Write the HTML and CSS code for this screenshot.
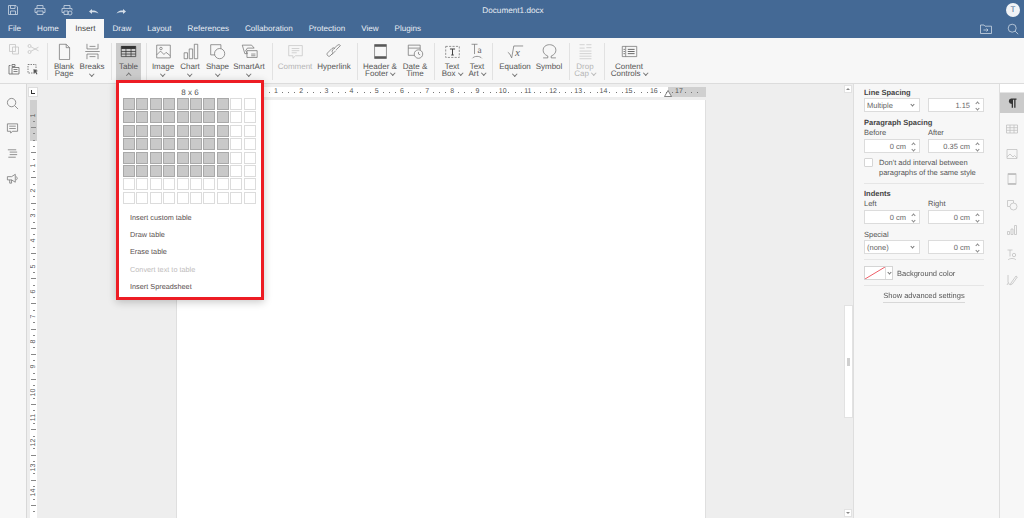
FILE: index.html
```html
<!DOCTYPE html>
<html lang="en">
<head>
<meta charset="utf-8">
<title>Document1.docx</title>
<link rel="stylesheet" href="styles.css">
</head>
<body>
<div class="app">
  <header class="head">
    <div class="titlebar">
      <div class="quick">
        <svg class="qi" viewBox="0 0 12 12"><path d="M1.500 1.500h7.500l1.500 1.500v7.500h-9zM3.500 1.500v3h4.500v-3M3.500 10.500v-3.500h5v3.500"/></svg>
        <svg class="qi" viewBox="0 0 12 12"><path d="M3 4V1.500h6V4M3 8.500H1V4.500h10v4H9M3 7h6v3.500H3z"/></svg>
        <svg class="qi" viewBox="0 0 12 12"><path d="M3 4V1.500h6V4M3 8.500H1V4.500h10v2M3 7h4v3.500H3z"/><circle cx="9" cy="9" r="2"/></svg>
        <svg class="qi fill" viewBox="0 0 12 12"><path d="M1 6.500L4 4v1.500c3 0 5 .5 6.500 3-1.500-1-3.500-1.300-6.500-1.200V9z"/></svg>
        <svg class="qi fill" viewBox="0 0 12 12"><path d="M11 6.500L8 4v1.500c-3 0-5 .5-6.500 3 1.500-1 3.500-1.300 6.500-1.200V9z"/></svg>
      </div>
      <div class="doc-title">Document1.docx</div>
      <div class="avatar">T</div>
    </div>
    <nav class="tabs">
      <span class="tab">File</span>
      <span class="tab">Home</span>
      <span class="tab active">Insert</span>
      <span class="tab">Draw</span>
      <span class="tab">Layout</span>
      <span class="tab">References</span>
      <span class="tab">Collaboration</span>
      <span class="tab">Protection</span>
      <span class="tab">View</span>
      <span class="tab">Plugins</span>
      <span class="tab-tools">
        <svg class="ti" viewBox="0 0 12 12"><path d="M.5 2h3.500l1 1.200h6.500v7.300H.5zM3.500 7h4.500M6.500 5.500L8 7 6.500 8.500"/></svg>
        <svg class="ti" viewBox="0 0 12 12"><circle cx="5.200" cy="5.200" r="4"/><path d="M8.200 8.200l3 3"/></svg>
      </span>
    </nav>
  </header>

  <div class="toolbar">
    <div class="group g-clip">
      <svg class="mini dim" viewBox="0 0 12 12"><path d="M1.500 1.500h6v7h-6zM4.500 4h6v7h-6z"/></svg>
      <svg class="mini dim" viewBox="0 0 12 12"><circle cx="2.500" cy="3" r="1.500"/><circle cx="2.500" cy="9" r="1.500"/><path d="M4 3.800l7.500 4M4 8.200l7.500-4"/></svg>
      <svg class="mini" viewBox="0 0 12 12"><path d="M2.500 2.500h-1.500v8.500h3M4 1.500h3v2h-3zM4 4.500h7v6.500h-7z"/><path d="M5.500 6.500h4M5.500 8.500h4"/></svg>
      <svg class="mini" viewBox="0 0 12 12"><path stroke-dasharray="1.500 1" d="M1 1.500h8v8.500h-8z"/><path class="solid" d="M6.500 6l4.500 2-2 .8 1.500 2.200-1 .5-1.300-2.200-1.500 1.200z"/></svg>
    </div>
    <i class="sep"></i>
    <div class="group g-b">
      <div class="tool w28">
        <svg class="ico" viewBox="0 0 20 20"><path d="M4 1.500h8l4 4v14H4zM12 1.500v4h4"/></svg>
        <span class="lbl">Blank<br>Page</span>
      </div>
      <div class="tool w28">
        <svg class="ico" viewBox="0 0 20 20"><path d="M3.500 1v6h13V1M3.500 19v-6h13v6M1.500 10h17M6.500 4h7M6.500 16h7"/></svg>
        <span class="lbl">Breaks</span><b class="chev"></b>
      </div>
    </div>
    <i class="sep"></i>
    <div class="group g-t">
      <div class="tool w25 on">
        <svg class="ico" viewBox="0 0 20 20"><path class="solid dk" d="M1.500 3.500h17v3.500h-17z"/><path class="dark" d="M1.500 4h17v12h-17zM1.500 10h17M1.500 13h17M7 4v12M13 4v12"/></svg>
        <span class="lbl">Table</span><b class="chev up"></b>
      </div>
    </div>
    <i class="sep"></i>
    <div class="group g-i">
      <div class="tool w26">
        <svg class="ico" viewBox="0 0 20 20"><path d="M2 2.500h16v15H2zM2 14l4.500-4.500 4 4 2.500-2.500 5 4"/><circle cx="7" cy="6.500" r="1.500"/></svg>
        <span class="lbl">Image</span><b class="chev"></b>
      </div>
      <div class="tool w28">
        <svg class="ico" viewBox="0 0 20 20"><path d="M2.500 11.500h4v7h-4zM8.500 7h4v11.500h-4zM14.500 1.500h4v17h-4z"/></svg>
        <span class="lbl">Chart</span><b class="chev"></b>
      </div>
      <div class="tool w27">
        <svg class="ico" viewBox="0 0 20 20"><path d="M2 2h12v12H2z"/><circle cx="12.500" cy="12.500" r="6" class="bgfill"/></svg>
        <span class="lbl">Shape</span><b class="chev"></b>
      </div>
      <div class="tool w36">
        <svg class="ico" viewBox="0 0 20 20"><path d="M1.500 2.500h11l3 3.500h-8l-2 3 2 3.500h-3zM7 9h12v8H7zM12 13h5M12 15h5"/></svg>
        <span class="lbl">SmartArt</span><b class="chev"></b>
      </div>
    </div>
    <i class="sep"></i>
    <div class="group g-c">
      <div class="tool w36 off">
        <svg class="ico" viewBox="0 0 20 20"><path d="M2 3h16v12h-8L7 18v-3H2zM5.500 6.500h9M5.500 9h9M5.500 11.500h6"/></svg>
        <span class="lbl">Comment</span>
      </div>
      <div class="tool w36">
        <svg class="ico" viewBox="0 0 20 20"><path d="M8 12l-3.500 3.500a2.500 2.500 0 0 1-3-3.500L7 6.500a2.500 2.500 0 0 1 3.500 0M12 8l5-5a2.500 2.500 0 0 0-3.500-.5L8 8a2.500 2.500 0 0 0 0 3.500M6.500 14l5-5"/></svg>
        <span class="lbl">Hyperlink</span>
      </div>
    </div>
    <i class="sep"></i>
    <div class="group g-h">
      <div class="tool w36">
        <svg class="ico" viewBox="0 0 20 20"><path class="solid" d="M3 1.500h14v3H3zM3 15.500h14v3H3z"/><path d="M3 2h14v16H3z"/></svg>
        <span class="lbl">Header &amp;<br>Footer <b class="chev inl"></b></span>
      </div>
      <div class="tool w34">
        <svg class="ico" viewBox="0 0 20 20"><path d="M1.500 2.500h14v12h-14zM1.500 6h14"/><circle class="bgfill" cx="13.500" cy="13" r="5"/><path d="M13.500 10.500V13l2 1"/></svg>
        <span class="lbl">Date &amp;<br>Time</span>
      </div>
    </div>
    <i class="sep"></i>
    <div class="group g-x">
      <div class="tool w28">
        <svg class="ico" viewBox="0 0 20 20"><path stroke-dasharray="2.500 1.500" d="M2 4h16v13H2z"/><path class="boldp" d="M7 7h6M10 7v7M8.500 14h3"/></svg>
        <span class="lbl">Text<br>Box <b class="chev inl"></b></span>
      </div>
      <div class="tool w22">
        <svg class="ico" viewBox="0 0 20 20"><path d="M3 1.500h7M6.500 1.500V13M4 18c2-3 9-3 11 0"/><text x="10" y="12" class="art">a</text></svg>
        <span class="lbl">Text<br>Art <b class="chev inl"></b></span>
      </div>
    </div>
    <i class="sep"></i>
    <div class="group g-e">
      <div class="tool w38">
        <svg class="ico" viewBox="0 0 20 20"><path d="M1 11l2 1.500 2.500 5L8 3.500h11"/><text x="9.500" y="15" class="eq">x</text></svg>
        <span class="lbl">Equation</span><b class="chev"></b>
      </div>
      <div class="tool w30">
        <svg class="ico" viewBox="0 0 20 20"><path d="M2.500 17.500H8v-2.200C4.500 14 2.500 11.500 2.500 8.500 2.500 4.500 5.800 2 10 2s7.500 2.500 7.500 6.500c0 3-2 5.500-5.500 6.800v2.200h5.500"/></svg>
        <span class="lbl">Symbol</span>
      </div>
    </div>
    <i class="sep"></i>
    <div class="group g-d">
      <div class="tool w26 off">
        <svg class="ico" viewBox="0 0 20 20"><path d="M3 2h6M3 6h6M3 9.500h14M3 12.500h14M3 15.500h14M3 18.500h14M11 2h6M11 5.500h6"/></svg>
        <span class="lbl">Drop<br>Cap <b class="chev inl"></b></span>
      </div>
    </div>
    <i class="sep"></i>
    <div class="group g-k">
      <div class="tool w40">
        <svg class="ico" viewBox="0 0 20 20"><path d="M1.500 4h17v12h-17zM5.500 4v12"/><path class="dark" d="M8 7.500h8M8 10h8M8 12.500h8M3 7.500h1.500M3 10h1.500M3 12.500h1.500"/></svg>
        <span class="lbl">Content<br>Controls <b class="chev inl"></b></span>
      </div>
    </div>
  </div>

  <main class="main">
    <aside class="rail">
      <svg class="ri" viewBox="0 0 14 14"><circle cx="6" cy="6" r="4.500"/><path d="M9.500 9.500l3.500 3.500"/></svg>
      <svg class="ri" viewBox="0 0 14 14"><path d="M1.500 2h11v8H7l-2 2v-2H1.500zM3.500 4.500h7M3.500 7h7"/></svg>
      <svg class="ri" viewBox="0 0 14 14"><path d="M2 3h9M4 5.500h8M4 8.200h8M2.500 11h8"/></svg>
      <svg class="ri" viewBox="0 0 14 14"><path d="M1.500 5h4.500L10 2.500v8.500L6 8.500H1.500zM4 8.500V12h2V8.500M11 5c1.500.5 1.500 3 0 3.500"/></svg>
    </aside>

    <section class="workspace">
      <div class="doc-area">
        <div class="hrow">
          <div class="corner"><span class="corner-mark"></span></div>
          <div class="hruler">
            <span class="cm"><i></i><i></i><i></i><i></i></span>
            <span class="cm"><em>1</em><i></i><i></i><i></i></span>
            <span class="cm"><em>2</em><i></i><i></i><i></i></span>
            <span class="cm"><em>3</em><i></i><i></i><i></i></span>
            <span class="cm"><em>4</em><i></i><i></i><i></i></span>
            <span class="cm"><em>5</em><i></i><i></i><i></i></span>
            <span class="cm"><em>6</em><i></i><i></i><i></i></span>
            <span class="cm"><em>7</em><i></i><i></i><i></i></span>
            <span class="cm"><em>8</em><i></i><i></i><i></i></span>
            <span class="cm"><em>9</em><i></i><i></i><i></i></span>
            <span class="cm"><em>10</em><i></i><i></i><i></i></span>
            <span class="cm"><em>11</em><i></i><i></i><i></i></span>
            <span class="cm"><em>12</em><i></i><i></i><i></i></span>
            <span class="cm"><em>13</em><i></i><i></i><i></i></span>
            <span class="cm"><em>14</em><i></i><i></i><i></i></span>
            <span class="cm"><em>15</em><i></i><i></i><i></i></span>
            <span class="cm"><em>16</em><i></i><i></i><i></i></span>
            <span class="cm"><em>17</em><i></i><i></i><i></i></span>
            <svg class="indent" viewBox="0 0 8 7"><path d="M4 .5L7.500 6.500H.5z"/></svg>
          </div>
        </div>
        <div class="brow">
          <div class="vruler">
            <span class="vm"><em>1</em><i></i><i></i><i></i></span>
            <span class="vm"><i></i><i></i><i></i><i></i></span>
            <span class="vm"><em>1</em><i></i><i></i><i></i></span>
            <span class="vm"><em>2</em><i></i><i></i><i></i></span>
            <span class="vm"><em>3</em><i></i><i></i><i></i></span>
            <span class="vm"><em>4</em><i></i><i></i><i></i></span>
            <span class="vm"><em>5</em><i></i><i></i><i></i></span>
            <span class="vm"><em>6</em><i></i><i></i><i></i></span>
            <span class="vm"><em>7</em><i></i><i></i><i></i></span>
            <span class="vm"><em>8</em><i></i><i></i><i></i></span>
            <span class="vm"><em>9</em><i></i><i></i><i></i></span>
            <span class="vm"><em>10</em><i></i><i></i><i></i></span>
            <span class="vm"><em>11</em><i></i><i></i><i></i></span>
            <span class="vm"><em>12</em><i></i><i></i><i></i></span>
            <span class="vm"><em>13</em><i></i><i></i><i></i></span>
            <span class="vm"><em>14</em><i></i><i></i><i></i></span>
          </div>
          <div class="page"></div>
        </div>
      </div>
      <div class="scroll">
        <span class="sbtn"><b class="tri"></b></span>
        <span class="thumb"><b class="grip"></b></span>
        <span class="sbtn"><b class="tri down"></b></span>
      </div>
    </section>

    <div class="popup">
      <div class="pop-title">8 x 6</div>
      <div class="picker">
        <s class="c f"></s><s class="c f"></s><s class="c f"></s><s class="c f"></s><s class="c f"></s><s class="c f"></s><s class="c f"></s><s class="c f"></s><s class="c"></s><s class="c"></s>
        <s class="c f"></s><s class="c f"></s><s class="c f"></s><s class="c f"></s><s class="c f"></s><s class="c f"></s><s class="c f"></s><s class="c f"></s><s class="c"></s><s class="c"></s>
        <s class="c f"></s><s class="c f"></s><s class="c f"></s><s class="c f"></s><s class="c f"></s><s class="c f"></s><s class="c f"></s><s class="c f"></s><s class="c"></s><s class="c"></s>
        <s class="c f"></s><s class="c f"></s><s class="c f"></s><s class="c f"></s><s class="c f"></s><s class="c f"></s><s class="c f"></s><s class="c f"></s><s class="c"></s><s class="c"></s>
        <s class="c f"></s><s class="c f"></s><s class="c f"></s><s class="c f"></s><s class="c f"></s><s class="c f"></s><s class="c f"></s><s class="c f"></s><s class="c"></s><s class="c"></s>
        <s class="c f"></s><s class="c f"></s><s class="c f"></s><s class="c f"></s><s class="c f"></s><s class="c f"></s><s class="c f"></s><s class="c f"></s><s class="c"></s><s class="c"></s>
        <s class="c"></s><s class="c"></s><s class="c"></s><s class="c"></s><s class="c"></s><s class="c"></s><s class="c"></s><s class="c"></s><s class="c"></s><s class="c"></s>
        <s class="c"></s><s class="c"></s><s class="c"></s><s class="c"></s><s class="c"></s><s class="c"></s><s class="c"></s><s class="c"></s><s class="c"></s><s class="c"></s>
      </div>
      <ul class="pop-menu">
        <li>Insert custom table</li>
        <li>Draw table</li>
        <li>Erase table</li>
        <li class="dis">Convert text to table</li>
        <li>Insert Spreadsheet</li>
      </ul>
    </div>

    <aside class="panel">
      <h3 class="ph">Line Spacing</h3>
      <div class="two">
        <div class="field sel">Multiple<b class="chev"></b></div>
        <div class="field num">1.15<span class="spin"><b class="chev up"></b><b class="chev"></b></span></div>
      </div>
      <h3 class="ph p2">Paragraph Spacing</h3>
      <div class="two labs"><label>Before</label><label>After</label></div>
      <div class="two">
        <div class="field num">0 cm<span class="spin"><b class="chev up"></b><b class="chev"></b></span></div>
        <div class="field num">0.35 cm<span class="spin"><b class="chev up"></b><b class="chev"></b></span></div>
      </div>
      <div class="check"><span class="box"></span><span class="ctext">Don't add interval between<br>paragraphs of the same style</span></div>
      <hr class="rule">
      <h3 class="ph">Indents</h3>
      <div class="two labs"><label>Left</label><label>Right</label></div>
      <div class="two">
        <div class="field num">0 cm<span class="spin"><b class="chev up"></b><b class="chev"></b></span></div>
        <div class="field num">0 cm<span class="spin"><b class="chev up"></b><b class="chev"></b></span></div>
      </div>
      <div class="two labs l3"><label>Special</label></div>
      <div class="two">
        <div class="field sel">(none)<b class="chev"></b></div>
        <div class="field num">0 cm<span class="spin"><b class="chev up"></b><b class="chev"></b></span></div>
      </div>
      <hr class="rule r2">
      <div class="bgrow">
        <span class="swatch"><svg class="slash" viewBox="0 0 21 12" preserveAspectRatio="none"><path d="M0 12L21 0"/></svg><span class="sw-arrow"><b class="chev"></b></span></span>
        <span class="bglabel">Background color</span>
      </div>
      <hr class="rule r3">
      <div class="adv"><span>Show advanced settings</span></div>
    </aside>

    <aside class="rrail">
      <span class="rtop"></span>
      <span class="rbtn act"><svg class="rri pil" viewBox="0 0 12 12"><path d="M5 1.500h5.500v1.300H9.500v8H8.200v-8H7v8H5.700V7A3 2.800 0 0 1 5 1.500z"/></svg></span>
      <span class="rbtn"><svg class="rri" viewBox="0 0 12 12"><path d="M.5 2h11v8h-11zM.5 4.700h11M.5 7.300h11M4 2v8M8 2v8"/></svg></span>
      <span class="rbtn"><svg class="rri" viewBox="0 0 12 12"><path d="M1 1.500h10v9H1zM1 9l3-3 3 3 1.500-1.500L11 10"/></svg></span>
      <span class="rbtn"><svg class="rri" viewBox="0 0 12 12"><path d="M2 .5h8v11H2z"/><path class="band" d="M2 .5h8v1.500H2zM2 10h8v1.500H2z"/></svg></span>
      <span class="rbtn"><svg class="rri" viewBox="0 0 12 12"><path d="M1.500 1.500h6v6h-6z"/><circle class="bgfill2" cx="7.500" cy="7.500" r="3.500"/></svg></span>
      <span class="rbtn"><svg class="rri" viewBox="0 0 12 12"><path d="M1.500 7.500h2v3h-2zM5 5h2v5.500H5zM8.500 1.500h2v9h-2z"/></svg></span>
      <span class="rbtn"><svg class="rri" viewBox="0 0 12 12"><path d="M1.500 1h5M4 1v6.500M2 11c1.500-2 6.500-2 8 0"/><circle cx="8" cy="6" r="1.700"/></svg></span>
      <span class="rbtn"><svg class="rri" viewBox="0 0 12 12"><path d="M2 1v7.500M1 11l1.500-2.500L3.500 11M5 9l5-7 1.300 1-5 7-2 .8z"/></svg></span>
    </aside>
  </main>
</div>
</body>
</html>
```

FILE: styles.css
```css
* { box-sizing: border-box; }
html, body { margin: 0; height: 100%; overflow: hidden; }
body { font-family: "Liberation Sans", Arial, sans-serif; font-size: 8px; color: #444; background: #f7f7f7; text-rendering: geometricPrecision; }
svg { display: block; fill: none; stroke: #707070; stroke-width: .85; }
svg .solid { fill: #555; stroke: none; }
svg .dk { fill: #333; }
svg .band { fill: #c2c2c2; stroke: none; }
svg .dark { stroke: #333; }
svg .bgfill { fill: #f7f7f7; }
svg .bgfill2 { fill: #f7f7f7; }
svg .boldp { stroke: #444; stroke-width: 1.200; }
svg text { stroke: none; fill: #666; }
svg .art { font-family: "Liberation Serif", serif; font-size: 11px; }
svg .eq { font-family: "Liberation Serif", serif; font-style: italic; font-size: 13px; }

.app { display: flex; flex-direction: column; height: 518px; filter: blur(.35px); }

.head { background: #446995; color: #e9eef4; height: 38px; flex: none; }
.titlebar { height: 19px; display: flex; align-items: center; position: relative; padding-top: 1px; }
.quick { display: flex; align-items: center; gap: 15px; padding-left: 7px; }
.qi { width: 12px; height: 12px; stroke: #c6d2e0; }
.qi.fill { fill: #d6dfe9; stroke: none; margin-top: 1px; }
.doc-title { position: absolute; left: 0; right: 0; top: 0; line-height: 22px; text-align: center; font-size: 8.200px; color: #e6ecf3; padding-left: 2px; }
.avatar { margin-left: auto; margin-right: 4px; width: 14px; height: 14px; border-radius: 50%; background: #f1f3f6; color: #446995; font-size: 8px; line-height: 14px; text-align: center; }

.tabs { height: 19px; display: flex; font-size: 8.100px; line-height: 20px; }
.tab { padding: 0 8px; }
.tab.active { background: #f7f7f7; color: #444; padding: 0 9px; margin-left: -.5px; }
.tab-tools { margin-left: auto; display: flex; align-items: center; gap: 15px; padding-right: 5px; }
.ti { width: 12px; height: 12px; stroke: #cdd8e4; stroke-width: .8; }

.toolbar { height: 46px; flex: none; display: flex; background: #f7f7f7; border-bottom: 1px solid #dcdcdc; padding-top: 5px; }
.sep { width: 1px; height: 37px; background: #e2e2e2; flex: none; }
.group { display: flex; height: 39px; flex: none; }
.g-clip { width: 47px; display: grid; grid-template-columns: 19px 19px; grid-auto-rows: 20px; padding-left: 8px; align-content: start; }
.g-b { padding: 0 5px 0 2px; }
.g-t { padding: 0 5px 0 4px; }
.g-i { padding: 0 5px 0 3px; }
.g-c { padding: 0 5px 0 4px; gap: 3px; }
.g-h { padding: 0 2px 0 4px; }
.g-x { padding: 0 4px 0 3px; }
.g-e { padding: 0 5px 0 3px; }
.g-d { padding: 0 6px 0 2px; }
.g-k { padding: 0 0 0 4px; }
.mini { width: 12px; height: 12px; stroke: #666; stroke-width: .8; }
.mini.dim { stroke: #c4c4c4; }

.tool { display: flex; flex-direction: column; align-items: center; text-align: center; flex: none; }
.tool.on { background: #cbcbcb; }
.w22 { width: 22px; } .w25 { width: 25px; } .w26 { width: 26px; } .w27 { width: 27px; }
.w28 { width: 28px; } .w30 { width: 30px; } .w34 { width: 34px; } .w36 { width: 36px; }
.w38 { width: 38px; } .w40 { width: 40px; }
.ico { width: 17px; height: 17px; margin-bottom: 2.500px; flex: none; }
.lbl { font-size: 8px; line-height: 7.600px; white-space: nowrap; color: #555; }
.off .lbl { color: #b5b5b5; }
.off svg { stroke: #c4c4c4; }
.chev { display: block; width: 3.500px; height: 3.500px; border-right: 1px solid #777; border-bottom: 1px solid #777; transform: rotate(45deg); margin-top: 2px; flex: none; }
.chev.up { transform: rotate(225deg); margin-top: 4px; }
.chev.inl { display: inline-block; margin: 0 0 1.500px 1px; }
.off .chev { border-color: #bbb; }

.main { flex: 1; display: flex; min-height: 0; position: relative; }
.rail { width: 27px; flex: none; border-right: 1px solid #d8d8d8; background: #f7f7f7; display: flex; flex-direction: column; align-items: center; gap: 12px; padding: 13px 1px 0 0; }
.ri { width: 13px; height: 13px; stroke: #777; }

.workspace { flex: 1; min-width: 0; display: flex; background: #eeeeee; overflow: hidden; }
.doc-area { width: 816px; flex: none; display: flex; flex-direction: column; overflow: hidden; }
.hrow { height: 10px; margin: 3px 0; display: flex; flex: none; }
.corner { width: 10px; height: 10px; margin-left: 1px; background: #fff; border: 1px solid #ddd; display: flex; align-items: center; justify-content: center; }
.corner-mark { width: 4px; height: 4px; border-left: 1.500px solid #333; border-bottom: 1.500px solid #333; }
.hruler { width: 530px; margin-left: 138px; flex: none; display: flex; padding-left: 71.650px; position: relative; background: linear-gradient(to right, #d0d0d0 75px, #fff 75px, #fff 492px, #d0d0d0 492px); }
.cm { width: 25.200px; flex: none; display: grid; grid-template-columns: repeat(4, 6.300px); align-items: center; justify-items: center; }
.cm em { font-style: normal; font-size: 7px; line-height: 10px; color: #555; white-space: nowrap; }
.cm i { width: 1px; height: 1px; background: #777; }
.indent { position: absolute; left: 488px; top: 3px; width: 8px; height: 7px; fill: #fff; stroke: #666; stroke-width: .8; }

.brow { flex: 1; min-height: 0; display: flex; overflow: hidden; }
.vruler { width: 7px; margin-left: 3px; flex: none; padding-top: 11.850px; overflow: hidden; background: linear-gradient(to bottom, #cfcfcf 41px, #fff 41px); }
.vm { height: 25.200px; display: grid; grid-template-rows: repeat(4, 6.300px); align-items: center; justify-items: center; }
.vm em { font-style: normal; font-size: 7px; line-height: 7px; color: #555; transform: rotate(-90deg); white-space: nowrap; }
.vm i { width: 2px; height: 1px; background: #888; }
.vm i:nth-child(3) { width: 5px; }
.page { width: 530px; margin-left: 139px; flex: none; background: #fff; border-left: 1px solid #dfdfdf; border-right: 1px solid #dfdfdf; }

.scroll { flex: 1; display: flex; flex-direction: column; align-items: center; padding: 1px 0; }
.sbtn { width: 8px; height: 8px; background: #fff; border: 1px solid #e2e2e2; display: flex; align-items: center; justify-content: center; flex: none; }
.tri { width: 0; height: 0; border-left: 2px solid transparent; border-right: 2px solid transparent; border-bottom: 2px solid #888; }
.tri.down { border-bottom: 0; border-top: 2px solid #888; }
.thumb { width: 9px; height: 113px; margin: 212px 0 91px; background: #fff; border: 1px solid #e2e2e2; display: flex; align-items: center; justify-content: center; flex: none; }
.grip { width: 3px; height: 8px; background: #d0d0d0; }

.popup { position: absolute; left: 116px; top: -4px; width: 148px; height: 220px; background: #fff; border: 3px solid #ed1c24; box-shadow: 0 2px 8px rgba(0,0,0,.22); z-index: 5; }
.pop-title { text-align: center; line-height: 9px; font-size: 8px; padding-top: 5px; height: 15px; color: #555; }
.picker { display: grid; grid-template-columns: repeat(10, 12px); gap: 1.400px; margin-left: 4px; }
.c { display: block; height: 12px; background: #fff; border: 1px solid #dcdcdc; }
.c.f { background: #c9c9c9; border-color: #a9a9a9; }
.pop-menu { list-style: none; margin: 0; padding: 5px 0 0 11px; }
.pop-menu li { height: 17.300px; line-height: 17.300px; font-size: 7.300px; color: #5a5050; }
.pop-menu li.dis { color: #c0bcbc; }

.panel { width: 147px; flex: none; background: #f7f7f7; border-left: 1px solid #dedede; border-right: 1px solid #dedede; padding: 4px 0 0 10px; }
.ph { margin: 0; font-size: 7.500px; font-weight: bold; line-height: 9px; height: 10px; color: #444; }
.p2 { margin-top: 6px; }
.two { display: flex; gap: 8px; }
.labs { height: 11px; font-size: 7.500px; line-height: 10px; color: #555; }
.labs label { width: 56px; display: block; }
.l3 { margin-top: 6px; height: 10px; }
.field { width: 56px; height: 14px; background: #fff; border: 1px solid #dcdcdc; display: flex; align-items: center; font-size: 7.500px; color: #666; }
.sel { justify-content: space-between; padding: 0 5px 0 2px; }
.sel .chev { width: 3px; height: 3px; margin: -2px 0 0; }
.num { justify-content: flex-end; }
.spin { width: 11px; display: flex; flex-direction: column; align-items: center; gap: 2px; margin-left: 2px; flex: none; }
.spin .chev { width: 3px; height: 3px; margin: 0; border-color: #888; border-width: .8px; }
.spin .chev.up { margin-top: 2px; }
.check { display: flex; margin-top: 5px; gap: 6px; }
.box { width: 9px; height: 9px; background: #fff; border: 1px solid #d5d5d5; border-radius: 1px; flex: none; }
.ctext { font-size: 7.500px; line-height: 10px; color: #555; }
.rule { border: 0; border-top: 1px solid #e6e6e6; margin: 5px 0; width: 120px; }
.r2 { margin: 5px 0 6px; }
.r3 { margin: 5px 0; }
.bgrow { display: flex; align-items: center; gap: 4px; height: 14px; }
.swatch { width: 29px; height: 14px; background: #fff; border: 1px solid #d5d5d5; display: flex; flex: none; }
.slash { flex: 1; height: 12px; stroke: #ef5a64; stroke-width: 1; }
.sw-arrow { width: 7px; border-left: 1px solid #ddd; display: flex; align-items: center; justify-content: center; }
.sw-arrow .chev { width: 3px; height: 3px; margin: -2px 0 0; }
.bglabel { font-size: 7.500px; color: #555; }
.adv { width: 120px; text-align: center; font-size: 7.500px; color: #555; }
.adv span { display: inline-block; border-bottom: 1px solid #d8d8d8; line-height: 10px; padding-bottom: 1px; }

.rrail { width: 24px; flex: none; background: #f7f7f7; display: flex; flex-direction: column; }
.rtop { height: 9px; flex: none; background: #fff; border-bottom: 1px solid #e4e4e4; }
.rbtn { height: 25.300px; flex: none; display: flex; align-items: center; justify-content: center; }
.rbtn.act { height: 20px; background: #cbcbcb; margin-bottom: 3px; }
.rri { width: 12px; height: 12px; stroke: #c2c2c2; stroke-width: .8; }
.pil { fill: #333; stroke: none; }
```
